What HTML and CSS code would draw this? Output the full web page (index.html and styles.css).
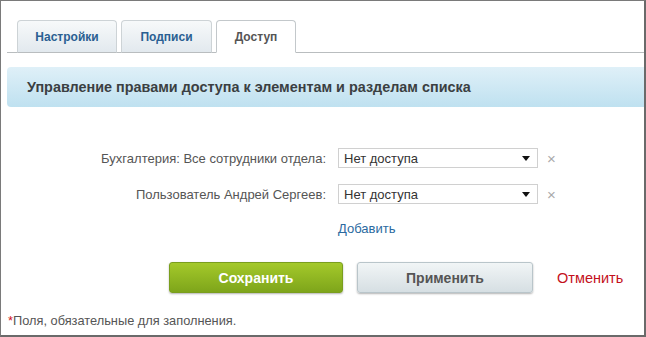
FILE: index.html
```html
<!DOCTYPE html>
<html lang="ru">
<head>
<meta charset="utf-8">
<link rel="stylesheet" href="styles.css">
</head>
<body>
<div class="frame">
  <div class="tabs">
    <div class="tab">Настройки</div>
    <div class="tab tab-2">Подписи</div>
    <div class="tab tab-active">Доступ</div>
  </div>
  <div class="header">Управление правами доступа к элементам и разделам списка</div>
  <div class="form">
    <div class="label">Бухгалтерия: Все сотрудники отдела:</div>
    <div class="select"><span>Нет доступа</span><span class="arrow"></span></div>
    <div class="remove">×</div>
    <div class="label">Пользователь Андрей Сергеев:</div>
    <div class="select"><span>Нет доступа</span><span class="arrow"></span></div>
    <div class="remove">×</div>
    <div></div>
    <a class="add" href="#">Добавить</a>
    <div></div>
  </div>
  <div class="buttons">
    <button class="btn btn-save">Сохранить</button>
    <button class="btn btn-apply">Применить</button>
    <a class="cancel" href="#">Отменить</a>
  </div>
  <div class="note"><span class="star">*</span>Поля, обязательные для заполнения.</div>
</div>
</body>
</html>
```
FILE: styles.css
```css
html, body {
  margin: 0;
  padding: 0;
  background: #fff;
}
body {
  font-family: "Liberation Sans", Arial, sans-serif;
  color: #333;
}
.frame {
  box-sizing: border-box;
  width: 646px;
  height: 337px;
  border-left: 1px solid #7a7a7a;
  border-top: 1px solid #7a7a7a;
  border-right: 2px solid #6a6a6a;
  border-bottom: 2px solid #6a6a6a;
  overflow: hidden;
}
.tabs {
  display: flex;
  gap: 4px;
  margin: 18px 0 0 6px;
  padding-left: 10px;
  border-bottom: 1px solid #b9bdbf;
  height: 33px;
  align-items: flex-end;
}
.tab {
  box-sizing: border-box;
  height: 33px;
  width: 100px;
  margin-bottom: -1px;
  border: 1px solid #cdd3d6;
  border-bottom-color: #b9bdbf;
  border-radius: 4px 4px 0 0;
  background: linear-gradient(#f7f9fa, #e2e9ee);
  color: #2a5f92;
  font-weight: bold;
  font-size: 12px;
  display: flex;
  align-items: center;
  justify-content: center;
}
.tab-2 { width: 91px; }
.tab-active {
  width: 80px;
  background: #fff;
  color: #555;
  border-color: #c3c8cb;
  border-bottom-color: #fff;
}
.header {
  margin: 14px 0 0 6px;
  height: 40px;
  border-radius: 4px 0 0 4px;
  background: linear-gradient(#dff0f8, #bfe1f0);
  font-weight: bold;
  font-size: 14.4px;
  color: #3b3f42;
  display: flex;
  align-items: center;
  padding-left: 20px;
}
.form {
  display: grid;
  grid-template-columns: 325px 200px auto;
  column-gap: 12px;
  row-gap: 16px;
  margin-top: 41px;
  align-items: center;
}
.label {
  text-align: right;
  font-size: 13px;
  color: #555;
}
.select {
  box-sizing: border-box;
  height: 20px;
  border: 1px solid #d0d0d0;
  display: flex;
  align-items: center;
  justify-content: space-between;
  padding: 0 5px 0 5px;
  font-size: 13px;
  color: #333;
}
.arrow {
  width: 0;
  height: 0;
  border-left: 4px solid transparent;
  border-right: 4px solid transparent;
  border-top: 5px solid #111;
  margin-right: 2px;
}
.remove {
  font-size: 15px;
  color: #aaa;
  margin-left: -3px;
}
.add {
  font-size: 13px;
  color: #2b6aa0;
  text-decoration: none;
  margin-top: 1px;
}
.buttons {
  display: flex;
  align-items: center;
  margin: 26px 0 0 168px;
}
.btn {
  height: 31px;
  border-radius: 3px;
  font-family: "Liberation Sans", Arial, sans-serif;
  font-weight: bold;
  font-size: 14px;
  padding: 0;
  box-shadow: 0 1px 2px rgba(0,0,0,0.3);
}
.btn-save {
  width: 174px;
  border: 1px solid #7a9e1e;
  background: linear-gradient(#a4c92a, #7ea51b);
  color: #fff;
}
.btn-apply {
  width: 176px;
  margin-left: 14px;
  border: 1px solid #b9c5ca;
  background: linear-gradient(#f1f5f6, #d6dfe3);
  color: #555;
}
.cancel {
  margin-left: 24px;
  font-size: 14.5px;
  color: #c4101c;
  text-decoration: none;
}
.note {
  margin: 20px 0 0 7px;
  font-size: 12.8px;
  color: #555;
}
.star { color: #d0151d; }
```
